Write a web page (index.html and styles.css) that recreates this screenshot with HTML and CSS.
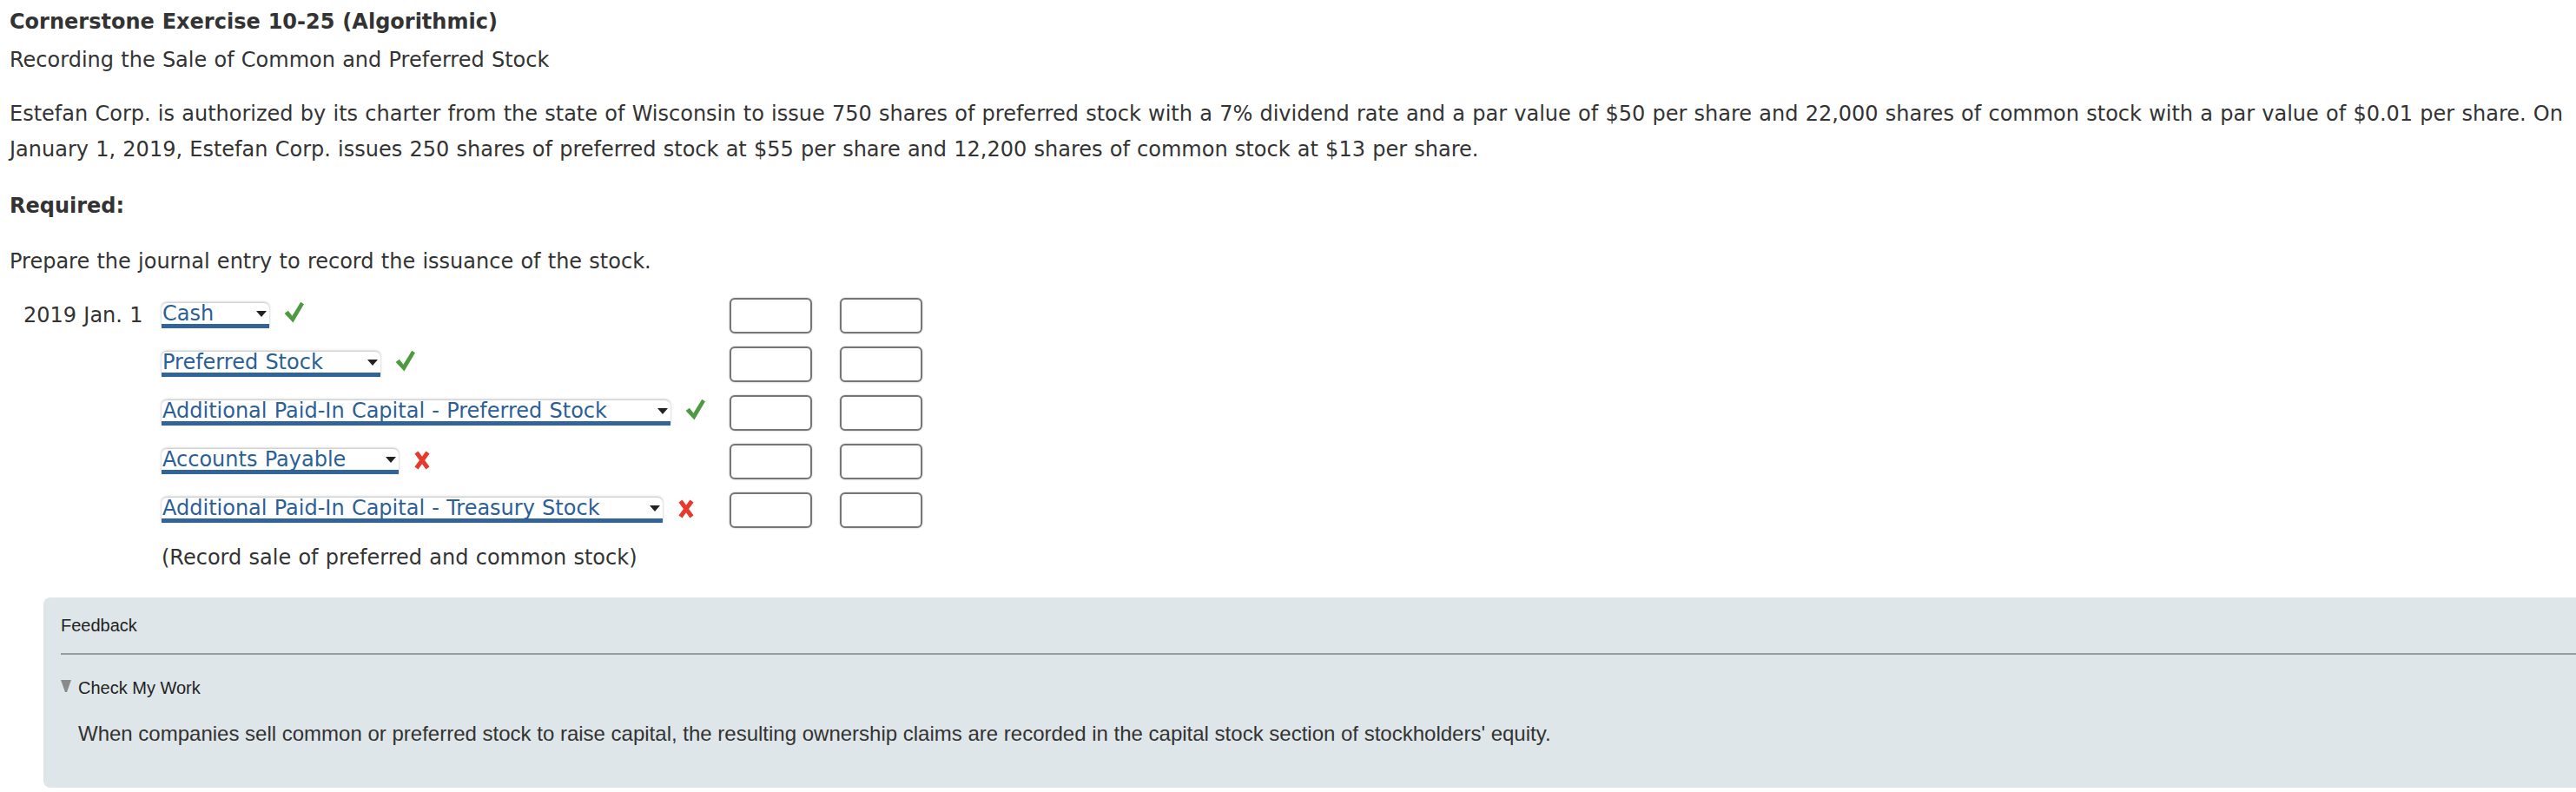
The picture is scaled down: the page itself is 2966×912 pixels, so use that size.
FILE: index.html
```html
<!DOCTYPE html>
<html lang="en">
<head>
<meta charset="utf-8">
<title>Cornerstone Exercise 10-25 (Algorithmic)</title>
<link rel="stylesheet" href="styles.css">
</head>
<body>
<div class="page">
  <div class="title">Cornerstone Exercise 10-25 (Algorithmic)</div>
  <div class="subtitle">Recording the Sale of Common and Preferred Stock</div>
  <p class="para">Estefan Corp. is authorized by its charter from the state of Wisconsin to issue 750 shares of preferred stock with a 7% dividend rate and a par value of $50 per share and 22,000 shares of common stock with a par value of $0.01 per share. On January 1, 2019, Estefan Corp. issues 250 shares of preferred stock at $55 per share and 12,200 shares of common stock at $13 per share.</p>
  <div class="required">Required:</div>
  <div class="prepare">Prepare the journal entry to record the issuance of the stock.</div>

  <div class="journal">
    <div class="date">2019 Jan. 1</div>
    <div class="account">
      <span class="select w-cash"><span class="sel-text">Cash</span><span class="arrow"></span></span>
      <svg class="mark check" viewBox="0 0 22 24"><path d="M0.5 13.5 L4.6 10.4 L9 16 L18.4 0.6 L22 3 L10 23.5 Z"/></svg>
    </div>
    <div class="amt"><span class="box"></span></div>
    <div class="amt"><span class="box"></span></div>

    <div class="date"></div>
    <div class="account">
      <span class="select w-pref"><span class="sel-text">Preferred Stock</span><span class="arrow"></span></span>
      <svg class="mark check" viewBox="0 0 22 24"><path d="M0.5 13.5 L4.6 10.4 L9 16 L18.4 0.6 L22 3 L10 23.5 Z"/></svg>
    </div>
    <div class="amt"><span class="box"></span></div>
    <div class="amt"><span class="box"></span></div>

    <div class="date"></div>
    <div class="account">
      <span class="select w-apic-p"><span class="sel-text">Additional Paid-In Capital - Preferred Stock</span><span class="arrow"></span></span>
      <svg class="mark check" viewBox="0 0 22 24"><path d="M0.5 13.5 L4.6 10.4 L9 16 L18.4 0.6 L22 3 L10 23.5 Z"/></svg>
    </div>
    <div class="amt"><span class="box"></span></div>
    <div class="amt"><span class="box"></span></div>

    <div class="date"></div>
    <div class="account">
      <span class="select w-ap"><span class="sel-text">Accounts Payable</span><span class="arrow"></span></span>
      <svg class="mark cross" viewBox="0 0 20 22"><path d="M3.5 2 L16.5 20 M16.5 2 L3.5 20"/></svg>
    </div>
    <div class="amt"><span class="box"></span></div>
    <div class="amt"><span class="box"></span></div>

    <div class="date"></div>
    <div class="account">
      <span class="select w-apic-t"><span class="sel-text">Additional Paid-In Capital - Treasury Stock</span><span class="arrow"></span></span>
      <svg class="mark cross" viewBox="0 0 20 22"><path d="M3.5 2 L16.5 20 M16.5 2 L3.5 20"/></svg>
    </div>
    <div class="amt"><span class="box"></span></div>
    <div class="amt"><span class="box"></span></div>

    <div class="date"></div>
    <div class="account note">(Record sale of preferred and common stock)</div>
  </div>

  <div class="feedback">
    <div class="fb-head">Feedback</div>
    <div class="fb-check"><svg class="tri" viewBox="0 0 12 14"><path d="M0 0 L12 0 L7 14 L5 14 Z"/></svg>Check My Work</div>
    <div class="fb-text">When companies sell common or preferred stock to raise capital, the resulting ownership claims are recorded in the capital stock section of stockholders' equity.</div>
  </div>
</div>
</body>
</html>
```

FILE: styles.css
```css
html, body {
  margin: 0;
  padding: 0;
  background: #ffffff;
}

body {
  overflow: hidden;
  font-family: "DejaVu Sans", Verdana, sans-serif;
  font-size: 24px;
  color: #333333;
}

.page {
  padding: 3px 0 0 11px;
  word-spacing: 0.6px;
}

.title {
  font-weight: bold;
  line-height: 44px;
}

.subtitle {
  line-height: 44px;
}

.para {
  margin: 20px 0 0 0;
  line-height: 41px;
}

.required {
  margin-top: 24px;
  line-height: 41px;
  font-weight: bold;
}

.prepare {
  margin-top: 23px;
  line-height: 41px;
}

.journal {
  margin-top: 12px;
  display: grid;
  grid-template-columns: 175px 654px 127px 95px;
  grid-auto-rows: 56px;
  align-items: center;
}

.date {
  padding-left: 16px;
  line-height: 41px;
  margin-top: 3px;
}

.account {
  display: flex;
  align-items: center;
}

.note {
  line-height: 41px;
}

.select {
  position: relative;
  display: inline-block;
  box-sizing: border-box;
  height: 29px;
  margin-top: 2px;
  line-height: 24px;
  padding-left: 1px;
  background: #ffffff;
  color: #2b5f96;
  border-bottom: 5px solid #336497;
  border-radius: 6px 6px 0 0;
  box-shadow: 0 -1px 3px rgba(0, 0, 0, 0.28);
  white-space: nowrap;
}

.sel-text {
  display: inline-block;
}

.arrow {
  position: absolute;
  right: 3px;
  top: 9px;
  width: 0;
  height: 0;
  border-left: 6px solid transparent;
  border-right: 6px solid transparent;
  border-top: 7px solid #222222;
}

.w-cash { width: 124px; }
.w-pref { width: 252px; }
.w-apic-p { width: 586px; }
.w-ap { width: 273px; }
.w-apic-t { width: 577px; }

.mark {
  margin-left: 17px;
  flex: none;
}

.check {
  width: 23px;
  height: 25px;
  margin-top: -6px;
}

.check path {
  fill: #4e9a41;
}

.cross {
  width: 20px;
  height: 22px;
}

.cross path {
  fill: none;
  stroke: #e53a2d;
  stroke-width: 5;
  stroke-linecap: butt;
}

.amt {
  display: flex;
  align-items: center;
}

.box {
  display: block;
  box-sizing: border-box;
  width: 95px;
  height: 41px;
  margin-top: 3px;
  border: 2px solid #767676;
  border-radius: 6px;
  background: #ffffff;
  box-shadow: 0 0 2px rgba(0, 0, 0, 0.3);
}

.feedback {
  margin: 18px 0 0 39px;
  padding: 0 0 47px 20px;
  background: #dfe6e9;
  border-radius: 8px 0 0 8px;
  font-family: "Liberation Sans", Arial, sans-serif;
  color: #222222;
  word-spacing: 0;
}

.fb-head {
  padding: 18px 0;
  line-height: 28px;
  font-size: 20px;
  border-bottom: 2px solid #999da1;
}

.fb-check {
  margin-top: 24px;
  line-height: 28px;
  font-size: 20px;
  display: flex;
  align-items: center;
}

.tri {
  width: 12px;
  height: 14px;
  margin-right: 8px;
  margin-top: -4px;
}

.tri path {
  fill: #8a8a8a;
}

.fb-text {
  margin-top: 24px;
  padding-left: 20px;
  line-height: 30px;
  font-size: 24px;
  color: #333333;
}
```
